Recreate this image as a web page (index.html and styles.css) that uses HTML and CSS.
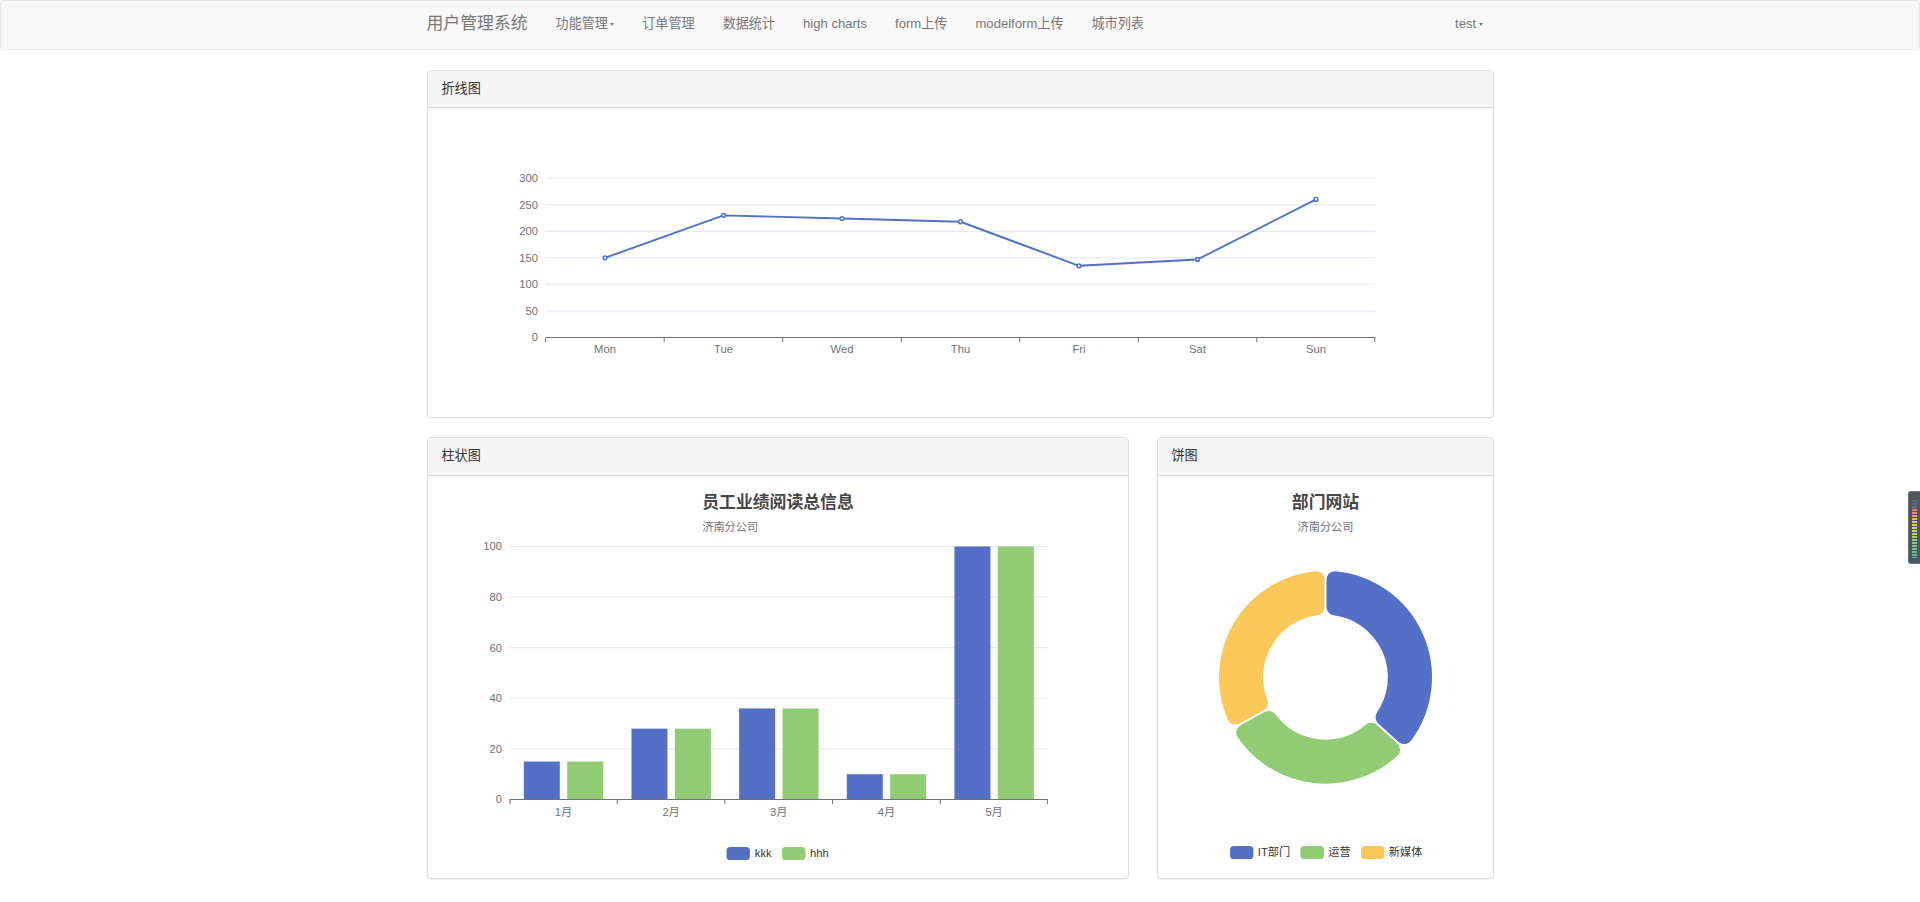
FILE: index.html
```html
<!DOCTYPE html>
<html lang="zh-CN">
<head>
<meta charset="utf-8">
<title>用户管理系统</title>
<link rel="stylesheet" href="styles.css">
</head>
<body>
<nav class="navbar">
  <div class="container nav-inner">
    <a class="brand">用户管理系统</a>
    <ul class="nav">
      <li><a>功能管理<span class="caret"></span></a></li>
      <li><a>订单管理</a></li>
      <li><a>数据统计</a></li>
      <li><a>high charts</a></li>
      <li><a>form上传</a></li>
      <li><a>modelform上传</a></li>
      <li><a>城市列表</a></li>
    </ul>
    <ul class="nav nav-right">
      <li><a>test<span class="caret"></span></a></li>
    </ul>
  </div>
</nav>

<div class="container">
  <div class="panel">
    <div class="panel-heading">折线图</div>
    <div class="panel-body">
      <svg class="chart line-chart" width="1037" height="281" viewBox="0 0 1037 281">
        <g class="split">
          <line x1="103.7" y1="188.95" x2="933.3" y2="188.95"/>
          <line x1="103.7" y1="162.4" x2="933.3" y2="162.4"/>
          <line x1="103.7" y1="135.85" x2="933.3" y2="135.85"/>
          <line x1="103.7" y1="109.3" x2="933.3" y2="109.3"/>
          <line x1="103.7" y1="82.75" x2="933.3" y2="82.75"/>
          <line x1="103.7" y1="56.2" x2="933.3" y2="56.2"/>
        </g>
        <g class="axis">
          <line x1="103.7" y1="215.5" x2="933.3" y2="215.5"/>
          <line x1="103.7" y1="215.5" x2="103.7" y2="220.2"/>
          <line x1="222.2" y1="215.5" x2="222.2" y2="220.2"/>
          <line x1="340.7" y1="215.5" x2="340.7" y2="220.2"/>
          <line x1="459.2" y1="215.5" x2="459.2" y2="220.2"/>
          <line x1="577.7" y1="215.5" x2="577.7" y2="220.2"/>
          <line x1="696.3" y1="215.5" x2="696.3" y2="220.2"/>
          <line x1="814.8" y1="215.5" x2="814.8" y2="220.2"/>
          <line x1="932.8" y1="215.5" x2="932.8" y2="220.2"/>
        </g>
        <g class="ylab">
          <text x="96" y="219.4">0</text>
          <text x="96" y="192.9">50</text>
          <text x="96" y="166.3">100</text>
          <text x="96" y="139.8">150</text>
          <text x="96" y="113.2">200</text>
          <text x="96" y="86.7">250</text>
          <text x="96" y="60.1">300</text>
        </g>
        <g class="xlab">
          <text x="163" y="231.4">Mon</text>
          <text x="281.5" y="231.4">Tue</text>
          <text x="400" y="231.4">Wed</text>
          <text x="518.5" y="231.4">Thu</text>
          <text x="637" y="231.4">Fri</text>
          <text x="755.5" y="231.4">Sat</text>
          <text x="874" y="231.4">Sun</text>
        </g>
        <polyline class="series" points="163,135.85 281.5,93.37 400,96.56 518.5,99.74 637,143.81 755.5,137.44 874,77.44"/>
        <g class="dots">
          <circle cx="163" cy="135.85" r="1.9"/>
          <circle cx="281.5" cy="93.37" r="1.9"/>
          <circle cx="400" cy="96.56" r="1.9"/>
          <circle cx="518.5" cy="99.74" r="1.9"/>
          <circle cx="637" cy="143.81" r="1.9"/>
          <circle cx="755.5" cy="137.44" r="1.9"/>
          <circle cx="874" cy="77.44" r="1.9"/>
        </g>
      </svg>
    </div>
  </div>

  <div class="row">
    <div class="col-8">
      <div class="panel">
        <div class="panel-heading">柱状图</div>
        <div class="panel-body">
          <svg class="chart" width="672" height="374.4" viewBox="0 0 672 374.4">
            <text class="title" x="336" y="18" text-anchor="middle">员工业绩阅读总信息</text>
            <text class="subtitle" x="260.2" y="40.8">济南分公司</text>
            <g class="split">
              <line x1="67.6" y1="258.9" x2="605.9" y2="258.9"/>
              <line x1="67.6" y1="208.3" x2="605.9" y2="208.3"/>
              <line x1="67.6" y1="157.7" x2="605.9" y2="157.7"/>
              <line x1="67.6" y1="107.1" x2="605.9" y2="107.1"/>
              <line x1="67.6" y1="56.5" x2="605.9" y2="56.5"/>
            </g>
            <g class="bar-a">
              <rect x="81.8" y="271.55" width="36" height="37.95"/>
              <rect x="189.46" y="238.66" width="36" height="70.84"/>
              <rect x="297.12" y="218.42" width="36" height="91.08"/>
              <rect x="404.78" y="284.2" width="36" height="25.3"/>
              <rect x="512.44" y="56.5" width="36" height="253"/>
            </g>
            <g class="bar-b">
              <rect x="125.2" y="271.55" width="36" height="37.95"/>
              <rect x="232.86" y="238.66" width="36" height="70.84"/>
              <rect x="340.52" y="218.42" width="36" height="91.08"/>
              <rect x="448.18" y="284.2" width="36" height="25.3"/>
              <rect x="555.84" y="56.5" width="36" height="253"/>
            </g>
            <g class="axis">
              <line x1="67.6" y1="309.5" x2="605.9" y2="309.5"/>
              <line x1="68.1" y1="309.5" x2="68.1" y2="314.2"/>
              <line x1="175.3" y1="309.5" x2="175.3" y2="314.2"/>
              <line x1="282.9" y1="309.5" x2="282.9" y2="314.2"/>
              <line x1="390.6" y1="309.5" x2="390.6" y2="314.2"/>
              <line x1="498.2" y1="309.5" x2="498.2" y2="314.2"/>
              <line x1="605.4" y1="309.5" x2="605.4" y2="314.2"/>
            </g>
            <g class="ylab">
              <text x="60" y="313.4">0</text>
              <text x="60" y="262.8">20</text>
              <text x="60" y="212.2">40</text>
              <text x="60" y="161.6">60</text>
              <text x="60" y="111">80</text>
              <text x="60" y="60.4">100</text>
            </g>
            <g class="xlab">
              <text x="121.4" y="325.6">1月</text>
              <text x="229.1" y="325.6">2月</text>
              <text x="336.8" y="325.6">3月</text>
              <text x="444.4" y="325.6">4月</text>
              <text x="552.1" y="325.6">5月</text>
            </g>
            <g class="legend">
              <rect class="lg-a" x="284.5" y="357" width="23.4" height="13.1" rx="3.7"/>
              <text x="312.8" y="367.4">kkk</text>
              <rect class="lg-b" x="340" y="357" width="23.4" height="13.1" rx="3.7"/>
              <text x="368" y="367.4">hhh</text>
            </g>
          </svg>
        </div>
      </div>
    </div>
    <div class="col-4">
      <div class="panel">
        <div class="panel-heading">饼图</div>
        <div class="panel-body">
          <svg class="chart" width="307" height="374.4" viewBox="0 0 307 374.4">
            <text class="title" x="153.5" y="18" text-anchor="middle">部门网站</text>
            <text class="subtitle" x="153.5" y="40.8" text-anchor="middle">济南分公司</text>
            <path class="seg seg-a" d="M162.90 89.55 A98.1 98.1 0 0 1 232.26 245.69 L211.87 227.27 A70.8 70.8 0 0 0 162.90 117.03 Z"/>
            <path class="seg seg-b" d="M219.65 259.64 A98.1 98.1 0 0 1 72.56 242.62 L96.61 229.34 A70.8 70.8 0 0 0 199.26 241.23 Z"/>
            <path class="seg seg-c" d="M63.47 226.16 A98.1 98.1 0 0 1 144.10 89.55 L144.10 117.03 A70.8 70.8 0 0 0 87.52 212.88 Z"/>
            <g class="legend">
              <rect class="lg-a" x="58" y="356" width="23.4" height="13.1" rx="3.7"/>
              <text x="85.8" y="366.4">IT部门</text>
              <rect class="lg-b" x="128.5" y="356" width="23.4" height="13.1" rx="3.7"/>
              <text x="156.2" y="366.4">运营</text>
              <rect class="lg-c" x="189" y="356" width="23.4" height="13.1" rx="3.7"/>
              <text x="216.8" y="366.4">新媒体</text>
            </g>
          </svg>
        </div>
      </div>
    </div>
  </div>
</div>

<div class="meter"><div class="meter-bars"></div></div>
</body>
</html>
```

FILE: styles.css
```css
html, body {
  margin: 0;
  padding: 0;
  background: #fff;
}

body {
  font-family: "Liberation Sans", Arial, "Noto Sans CJK SC", sans-serif;
  font-size: 13.1px;
  line-height: 1.43;
  color: #333;
}

ul {
  list-style: none;
  margin: 0;
  padding: 0;
}

.container {
  width: 1067px;
  margin: 0 auto;
}

/* navbar */
.navbar {
  background: #f8f8f8;
  border: 1px solid #e7e7e7;
  border-radius: 3px;
  margin-bottom: 20px;
}

.nav-inner {
  display: flex;
  align-items: center;
  height: 47.5px;
}

.brand {
  font-size: 16.85px;
  line-height: 18.7px;
  color: #777;
  padding-right: 14px;
}

.nav {
  display: flex;
}

.nav a {
  display: block;
  padding: 0 14px;
  line-height: 18.7px;
  color: #777;
}

.nav-right {
  margin-left: auto;
  margin-right: -3px;
}

.caret {
  display: inline-block;
  width: 0;
  height: 0;
  margin-left: 2.3px;
  vertical-align: middle;
  border-top: 3px solid #777;
  border-left: 2.5px solid transparent;
  border-right: 2.5px solid transparent;
}

/* panels */
.panel {
  background: #fff;
  border: 1px solid #ddd;
  border-radius: 4px;
  box-shadow: 0 1px 1px rgba(0, 0, 0, 0.05);
  margin-bottom: 19px;
}

.panel-heading {
  background: #f5f5f5;
  border-bottom: 1px solid #ddd;
  border-radius: 3px 3px 0 0;
  padding: 9px 14px;
  line-height: 18.7px;
  color: #333;
}

.panel-body {
  padding: 14px;
}

.row {
  display: flex;
  gap: 28px;
}

.col-8 {
  width: 702px;
}

.col-4 {
  width: 337px;
}

/* charts */
.chart {
  display: block;
  font-family: "Liberation Sans", Arial, "Noto Sans CJK SC", sans-serif;
  font-size: 11.2px;
}

.split line {
  stroke: #e0e6f1;
  stroke-width: 1;
}

.axis line {
  stroke: #6e7079;
  stroke-width: 1;
}

.ylab text {
  fill: #6e7079;
  text-anchor: end;
}

.xlab text {
  fill: #6e7079;
  text-anchor: middle;
}

.series {
  fill: none;
  stroke: #5470c6;
  stroke-width: 1.9;
  stroke-linejoin: bevel;
}

.dots circle {
  fill: #fff;
  stroke: #5470c6;
  stroke-width: 1.5;
}

.title {
  font-size: 16.85px;
  font-weight: bold;
  fill: #464646;
}

.subtitle {
  font-size: 11.2px;
  fill: #6e7079;
}

.bar-a rect { fill: #5470c6; }
.bar-b rect { fill: #91cc75; }

.legend text {
  fill: #333;
}

.lg-a { fill: #5470c6; }
.lg-b { fill: #91cc75; }
.lg-c { fill: #fac858; }

.seg {
  stroke-width: 16.8;
  stroke-linejoin: round;
}

.seg-a { fill: #5470c6; stroke: #5470c6; }
.seg-b { fill: #91cc75; stroke: #91cc75; }
.seg-c { fill: #fac858; stroke: #fac858; }

/* floating level meter widget on the right edge */
.meter {
  position: fixed;
  top: 491px;
  right: 0;
  width: 12px;
  height: 73px;
  background: #50555f;
  border: 1px solid #6c717b;
  border-right: none;
  border-radius: 3px 0 0 3px;
  display: flex;
  justify-content: center;
  padding-top: 8px;
  box-sizing: border-box;
}

.meter-bars {
  width: 5px;
  height: 58px;
  background:
    repeating-linear-gradient(to bottom, transparent 0 2px, #50555f 2px 3px),
    linear-gradient(to bottom, #5d6680 0%, #5d6680 12%, #d8775f 14%, #e39a5c 24%, #e2c96a 38%, #cfd66d 52%, #9fcf73 66%, #74c483 80%, #57b8a3 100%);
}
```
